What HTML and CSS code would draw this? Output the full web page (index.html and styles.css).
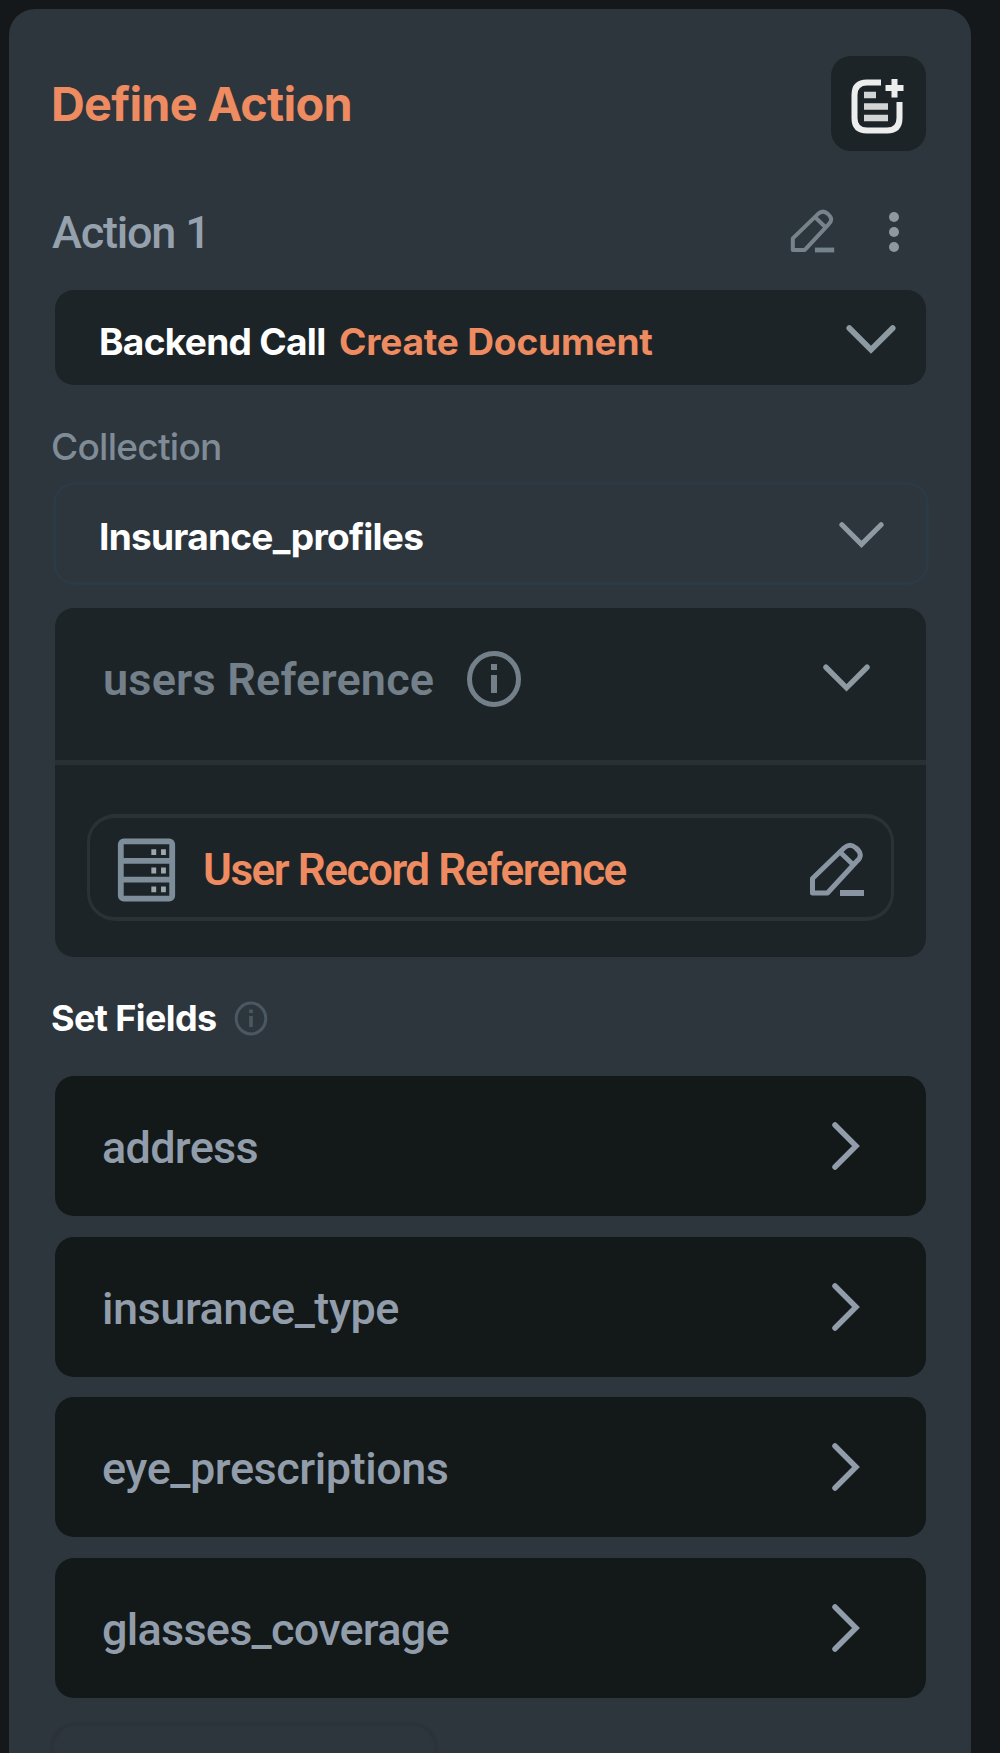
FILE: index.html
```html
<!DOCTYPE html>
<html lang="en">
<head>
<meta charset="utf-8">
<title>Define Action</title>
<link rel="stylesheet" href="styles.css">
</head>
<body>
<svg width="0" height="0" class="defs">
  <symbol id="pencil" viewBox="0 0 56 56">
    <path d="M3.5 36.500 35 6q6-5.500 12 0 8 7 1 13L18.500 51H3.500Z M31 10 45.500 24" fill="none" stroke="currentColor" stroke-width="5" stroke-linejoin="round"/>
    <path d="M31 51H55" stroke="currentColor" stroke-width="6"/>
  </symbol>
  <symbol id="chevron" viewBox="0 0 48 30">
    <path d="M3 4 24 25 45 4" fill="none" stroke="currentColor" stroke-width="5.500" stroke-linecap="round"/>
  </symbol>
  <symbol id="next" viewBox="0 0 30 48">
    <path d="M4 3 25 24 4 45" fill="none" stroke="currentColor" stroke-width="5.500" stroke-linecap="round"/>
  </symbol>
  <symbol id="info" viewBox="0 0 56 58">
    <ellipse cx="28" cy="29" rx="24.500" ry="25.500" fill="none" stroke="currentColor" stroke-width="5"/>
    <path d="M28 14v6M28 25v18" stroke="currentColor" stroke-width="6"/>
  </symbol>
</svg>
<main class="panel">
  <header class="header">
    <h1 class="title">Define Action</h1>
    <button class="add" aria-label="Add action">
      <svg width="56" height="58" viewBox="0 0 56 58" fill="none" stroke="#eceeee">
        <path d="M31 5.500H17Q4.500 5.500 4.500 18V41Q4.500 53.500 17 53.500H37Q49.500 53.500 49.500 41V25" stroke-width="6"/>
        <path d="M14 18H26M14 29.500H38M14 41H38" stroke-width="6.500" stroke="#d3d5d5"/>
        <path d="M44.500 2V20.500M35.500 11H53.500" stroke-width="6"/>
      </svg>
    </button>
  </header>
  <div class="action">
    <span class="action-name">Action 1</span>
    <svg class="edit" width="45" height="45"><use href="#pencil"/></svg>
    <svg width="12" height="44" viewBox="0 0 12 44" fill="#8d989f"><circle cx="6" cy="7" r="5"/><circle cx="6" cy="22" r="5"/><circle cx="6" cy="37" r="5"/></svg>
  </div>
  <div class="call">
    <span class="call-kind">Backend Call</span>
    <span class="call-name">Create Document</span>
    <svg class="arrow" width="50" height="31"><use href="#chevron"/></svg>
  </div>
  <div class="label">Collection</div>
  <div class="select">
    <span>Insurance_profiles</span>
    <svg class="arrow" width="45" height="28"><use href="#chevron"/></svg>
  </div>
  <section class="reference">
    <div class="reference-head">
      <span>users Reference</span>
      <svg width="56" height="58"><use href="#info"/></svg>
      <svg class="arrow" width="47" height="30"><use href="#chevron"/></svg>
    </div>
    <div class="reference-body">
      <div class="record">
        <svg width="59" height="64" viewBox="0 0 60 66">
          <rect x="3.500" y="3.500" width="53" height="59" rx="3" fill="none" stroke="#7d8d99" stroke-width="6"/>
          <path d="M3 23.500H57M3 43H57" stroke="#7d8d99" stroke-width="6"/>
          <path d="M35 14.500h5M45 14.500h5M35 33.500h5M45 33.500h5M35 53h5M45 53h5" stroke="#9da8ae" stroke-width="6"/>
        </svg>
        <span class="record-name">User Record Reference</span>
        <svg class="record-edit" width="56" height="56"><use href="#pencil"/></svg>
      </div>
    </div>
  </section>
  <div class="fields-label">
    <span>Set Fields</span>
    <svg width="34" height="35"><use href="#info"/></svg>
  </div>
  <ul class="fields">
    <li><span class="f1">address</span><svg width="30" height="48"><use href="#next"/></svg></li>
    <li><span class="f2">insurance_type</span><svg width="30" height="48"><use href="#next"/></svg></li>
    <li><span class="f3">eye_prescriptions</span><svg width="30" height="48"><use href="#next"/></svg></li>
    <li><span class="f4">glasses_coverage</span><svg width="30" height="48"><use href="#next"/></svg></li>
  </ul>
  <div class="more"></div>
</main>
</body>
</html>
```
FILE: styles.css
```css
* { box-sizing: border-box; }
body {
  margin: 0;
  height: 1753px;
  overflow: hidden;
  padding: 9px 29px 0 9px;
  background: #14181b;
  font-family: Inter, sans-serif;
  white-space: nowrap;
}
svg { display: block; flex: none; }
.defs { position: absolute; }
.panel {
  height: 1800px;
  padding: 47px 45px 0 46px;
  border-radius: 26px;
  background: #2d353d;
}
.header { display: flex; align-items: center; justify-content: space-between; height: 95px; }
.title { margin: 0 0 0 -4px; color: #ee8b60; font-size: 46.8px; font-weight: 700; letter-spacing: -0.75px; }
.add {
  display: flex; align-items: center; justify-content: center;
  width: 95px; height: 95px; padding: 4px 2px 0 0;
  border: 0; border-radius: 20px; background: #1d2428;
}
.action {
  display: flex; align-items: center;
  height: 60px; margin-top: 51px; padding-right: 26px;
  color: #95a1ac;
}
.action-name { flex: 1; margin-left: -3px; font: 500 45px Roboto, sans-serif; letter-spacing: -1.2px; }
.edit { margin: 0 53px 2px 0; color: #77838b; }
.call {
  display: flex; align-items: center;
  height: 95px; margin-top: 28px; padding: 7px 30px 0 44px;
  border-radius: 19px; background: #1d2428;
  font-size: 37.1px; font-weight: 700;
}
.call-kind { width: 240px; color: #fff; letter-spacing: -0.7px; }
.call-name { color: #ee8b60; letter-spacing: -0.2px; }
.arrow { margin: 0 0 3px auto; color: #8e9aa2; }
.label {
  height: 60px; margin: 32px 0 0 -4px;
  color: #7f8c96; font-size: 37.1px; font-weight: 500; line-height: 60px; letter-spacing: -0.75px;
}
.select {
  display: flex; align-items: center;
  height: 103px; margin: 5px -3px 0 -2px; padding: 6px 42px 0 43px;
  border: 3px solid #2b3a44; border-radius: 22px;
  color: #fff; font-size: 37.1px; font-weight: 700; letter-spacing: -0.75px;
}
.reference { height: 349px; margin-top: 23px; border-radius: 19px; background: #1d2428; }
.reference-head {
  display: flex; align-items: center; gap: 32px;
  height: 157px; padding: 1px 56px 11px 48px;
  border-bottom: 5px solid #283034;
  color: #73808a; font: 600 45px Roboto, sans-serif; letter-spacing: 0.2px;
}
.reference-head .arrow { margin-bottom: 2px; }
.reference-body { padding: 49px 32px 0; }
.record {
  display: flex; align-items: center;
  height: 107px; padding: 4px 26px 0 27px;
  border: solid #2a3236; border-width: 4px 3px; border-radius: 28px;
}
.record-name { margin-left: 27px; color: #ee8b60; font: 600 44px Roboto, sans-serif; letter-spacing: -1.45px; }
.record-edit { margin-left: auto; color: #8995a2; }
.fields-label {
  display: flex; align-items: center; gap: 17px;
  height: 60px; margin: 31px 0 0 -4px;
  color: #fff; font-size: 36px; font-weight: 700; letter-spacing: -0.6px;
}
.fields-label svg { color: #4b5861; }
.fields { display: flex; flex-direction: column; gap: 20.5px; margin: 28px 0 0; padding: 0; list-style: none; }
.fields li {
  display: flex; align-items: center; justify-content: space-between;
  height: 140px; padding: 0 65px 0 47px;
  border-radius: 19px; background: #131819;
  color: #919daa; font: 500 45px Roboto, sans-serif;
}
.fields span { padding-top: 3px; }
.f1 { letter-spacing: -0.7px; }
.f2, .f3 { letter-spacing: -0.45px; }
.f4 { letter-spacing: -0.75px; }
.more { width: 388px; height: 90px; margin: 24px 0 0 -5px; border: 4px solid #2c3239; border-radius: 26px; }
```
